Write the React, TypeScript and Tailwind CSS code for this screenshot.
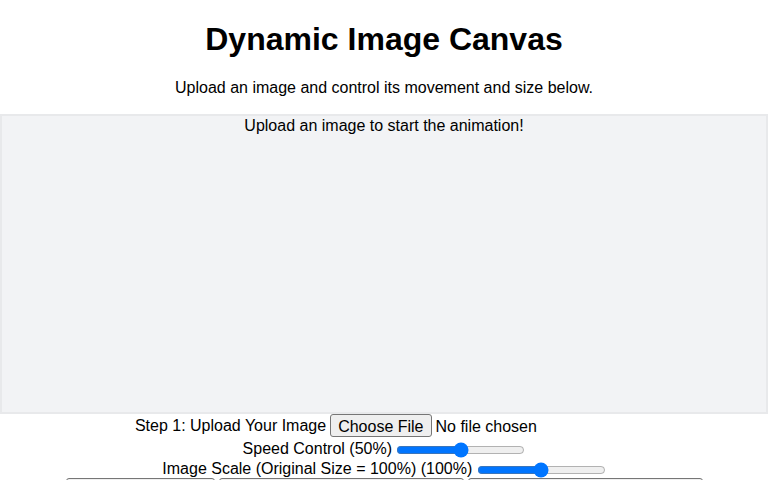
import { useState } from "react";

const App = () => {
    const [speed, setSpeed] = useState(50);
    const [scale, setScale] = useState(100);

    return (
        <div className="min-h-screen bg-white text-black text-center font-['Liberation_Sans',Arial,sans-serif]">
            <h1 className="text-[32px] leading-[37px] font-bold pt-[21px] mb-[21px]">Dynamic Image Canvas</h1>
            <p className="text-base leading-[18px] mb-[17px]">Upload an image and control its movement and size below.</p>

            <div className="w-full h-[300px] border-2 border-[#e8e9eb] bg-[#f2f3f5]">
                <p className="text-base leading-[18px] pt-[1px]">Upload an image to start the animation!</p>
            </div>

            <div className="h-[25px] flex items-start justify-center">
                <label className="mr-[4px] leading-[23px]">Step 1: Upload Your Image</label>
                <input
                    type="file"
                    accept="image/*"
                    className="text-base text-left w-[303px] leading-[23px] file:h-[23px] file:px-[7px] file:mr-[4px] file:border file:border-[#767676] file:rounded-[3px] file:bg-[#efefef] file:text-black"
                />
            </div>
            <div className="leading-[20px]">
                <label>Speed Control ({speed}%) </label>
                <input
                    type="range"
                    min={0}
                    max={100}
                    value={speed}
                    onChange={(e) => setSpeed(Number(e.target.value))}
                    className="align-middle"
                />
            </div>
            <div className="leading-[20px]">
                <label>Image Scale (Original Size = 100%) ({scale}%) </label>
                <input
                    type="range"
                    min={10}
                    max={190}
                    value={scale}
                    onChange={(e) => setScale(Number(e.target.value))}
                    className="align-middle"
                />
            </div>
            <div className="flex justify-center gap-[4px] -mt-[1px]">
                <button className="w-[149px] h-[30px] border border-[#767676] rounded-[3px] bg-[#efefef]">Start Animation</button>
                <button className="w-[245px] h-[30px] border border-[#767676] rounded-[3px] bg-[#efefef]">Pause Animation</button>
                <button className="w-[235px] h-[30px] border border-[#767676] rounded-[3px] bg-[#efefef]">Reset Image</button>
            </div>
        </div>
    )
}

export default App
